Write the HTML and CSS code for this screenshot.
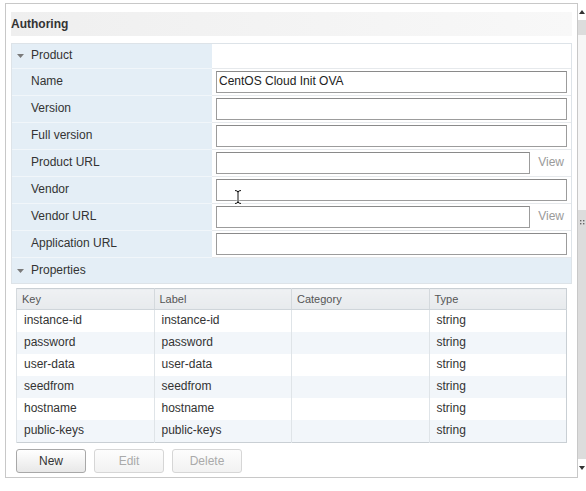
FILE: index.html
```html
<!DOCTYPE html>
<html lang="en">
<head>
    <meta charset="UTF-8">
    <title>Authoring</title>
    <link rel="stylesheet" href="styles.css">
</head>
<body>
    <div class="window">
        <div class="panel">
            <div class="section-title">Authoring</div>

            <div class="props-box">
                <div class="row group">
                    <div class="label"><svg class="caret" width="7" height="4" viewBox="0 0 7 4"><path d="M0 0H7L3.5 4Z" fill="#7a7a7a"/></svg>Product</div>
                    <div class="value"></div>
                </div>
                <div class="row">
                    <div class="label">Name</div>
                    <div class="value"><input type="text" value="CentOS Cloud Init OVA"></div>
                </div>
                <div class="row">
                    <div class="label">Version</div>
                    <div class="value"><input type="text"></div>
                </div>
                <div class="row">
                    <div class="label">Full version</div>
                    <div class="value"><input type="text"></div>
                </div>
                <div class="row">
                    <div class="label">Product URL</div>
                    <div class="value"><input type="text"><span class="view-link">View</span></div>
                </div>
                <div class="row">
                    <div class="label">Vendor</div>
                    <div class="value vendor-cell">
                        <input type="text">
                        <svg class="ibeam" width="8" height="16" viewBox="0 0 8 16">
                            <path d="M1 1.5Q4 1.5 4 3.5Q4 1.5 7 1.5M4 3.5V12.5M1 14.5Q4 14.5 4 12.5Q4 14.5 7 14.5" fill="none" stroke="#fff" stroke-width="2.4"/>
                            <path d="M1 1.5Q4 1.5 4 3.5Q4 1.5 7 1.5M4 3.5V12.5M1 14.5Q4 14.5 4 12.5Q4 14.5 7 14.5" fill="none" stroke="#111" stroke-width="1"/>
                        </svg>
                    </div>
                </div>
                <div class="row">
                    <div class="label">Vendor URL</div>
                    <div class="value"><input type="text"><span class="view-link">View</span></div>
                </div>
                <div class="row">
                    <div class="label">Application URL</div>
                    <div class="value"><input type="text"></div>
                </div>
                <div class="row group full">
                    <div class="label"><svg class="caret" width="7" height="4" viewBox="0 0 7 4"><path d="M0 0H7L3.5 4Z" fill="#7a7a7a"/></svg>Properties</div>
                </div>
            </div>

            <div class="properties">
                <table class="grid">
                    <thead>
                        <tr>
                            <th>Key</th>
                            <th>Label</th>
                            <th>Category</th>
                            <th>Type</th>
                        </tr>
                    </thead>
                    <tbody>
                        <tr><td>instance-id</td><td>instance-id</td><td></td><td>string</td></tr>
                        <tr><td>password</td><td>password</td><td></td><td>string</td></tr>
                        <tr><td>user-data</td><td>user-data</td><td></td><td>string</td></tr>
                        <tr><td>seedfrom</td><td>seedfrom</td><td></td><td>string</td></tr>
                        <tr><td>hostname</td><td>hostname</td><td></td><td>string</td></tr>
                        <tr><td>public-keys</td><td>public-keys</td><td></td><td>string</td></tr>
                    </tbody>
                </table>
                <div class="buttons">
                    <button class="btn">New</button>
                    <button class="btn" disabled>Edit</button>
                    <button class="btn" disabled>Delete</button>
                </div>
            </div>
        </div>

        <div class="scrollbar">
            <div class="sb-btn"><svg width="6" height="4" viewBox="0 0 6 4"><path d="M0 4H6L3 0Z" fill="#333"/></svg></div>
            <div class="sb-track">
                <div class="sb-thumb"></div>
                <div class="sb-grip">
                    <svg width="5" height="5" viewBox="0 0 5 5"><rect x="0" y="0" width="1.4" height="1.4" fill="#666"/><rect x="3" y="0" width="1.4" height="1.4" fill="#666"/><rect x="0" y="3" width="1.4" height="1.4" fill="#666"/><rect x="3" y="3" width="1.4" height="1.4" fill="#666"/></svg>
                </div>
            </div>
            <div class="sb-btn"><svg width="6" height="4" viewBox="0 0 6 4"><path d="M0 0H6L3 4Z" fill="#333"/></svg></div>
        </div>
    </div>
</body>
</html>
```

FILE: styles.css
```css
body {
    margin: 0;
    background-color: #ffffff;
    font-family: "Liberation Sans", Arial, sans-serif;
    font-size: 12px;
    color: #333333;
}

.window {
    display: flex;
    align-items: flex-start;
    padding: 3px 0 0 5px;
}

.panel {
    box-sizing: border-box;
    width: 573px;
    height: 475px;
    border: 1px solid #c8c8c8;
    padding: 8px 5px 0 5px;
}

.section-title {
    height: 24px;
    line-height: 24px;
    font-weight: bold;
    background: linear-gradient(to right, #efefef, #f8f8f8);
    margin-bottom: 7px;
}

.props-box {
    border: 1px solid #dde3e8;
}

.row {
    display: grid;
    grid-template-columns: 200px 1fr;
    height: 27px;
}

.row.group {
    height: 25px;
}

.row.full {
    grid-template-columns: 1fr;
}

.label {
    box-sizing: border-box;
    background-color: #e4eef6;
    border-bottom: 1px solid #f1f6fa;
    padding: 0 0 2px 19px;
    display: flex;
    align-items: center;
}

.group .label {
    padding-left: 5px;
}

.row.full .label {
    border-bottom: none;
}

.caret {
    margin: 2px 7px 0 0;
}

.value {
    box-sizing: border-box;
    border-bottom: 1px solid #e6e9ec;
    padding: 0 4px;
    display: flex;
    align-items: center;
}

.value input {
    flex: 1;
    min-width: 0;
    box-sizing: border-box;
    height: 22px;
    margin: 0;
    padding: 0 2px 2px 2px;
    border: 1px solid #9c9c9c;
    border-top-color: #8a8a8a;
    border-radius: 0;
    font-family: "Liberation Sans", Arial, sans-serif;
    font-size: 12px;
    color: #222222;
    background-color: #ffffff;
}

.view-link {
    margin: 0 3px 2px 8px;
    color: #9a9a9a;
}

.vendor-cell {
    position: relative;
}

.ibeam {
    position: absolute;
    left: 22px;
    top: 12px;
}

.properties {
    padding: 4px 5px 0 5px;
}

.grid {
    width: 100%;
    table-layout: fixed;
    border-collapse: collapse;
    border: 1px solid #c9cfd4;
}

.grid th {
    height: 20px;
    padding: 0 0 0 5px;
    text-align: left;
    font-weight: normal;
    font-size: 11px;
    color: #555555;
    background: linear-gradient(#eff1f3, #e7eaed);
    border-bottom: 1px solid #cfd5da;
    border-left: 1px solid #d4d9dd;
}

.grid td {
    height: 20px;
    padding: 0 0 2px 7px;
    border-left: 1px solid #dfe4e8;
}

.grid tbody tr:nth-child(even) td {
    background-color: #f2f6fa;
}

.buttons {
    display: flex;
    gap: 8px;
    margin-top: 6px;
}

.btn {
    width: 70px;
    height: 24px;
    border: 1px solid #a8a8a8;
    border-radius: 3px;
    background: linear-gradient(#ffffff, #e8e8e8);
    font-family: "Liberation Sans", Arial, sans-serif;
    font-size: 12px;
    color: #333333;
    padding: 0;
}

.btn:disabled {
    border-color: #d6d6d6;
    background: linear-gradient(#fdfdfd, #f2f2f2);
    color: #aaaaaa;
}

.scrollbar {
    width: 8px;
    height: 473px;
    display: flex;
    flex-direction: column;
}

.sb-btn {
    height: 17px;
    display: flex;
    align-items: center;
    justify-content: center;
    background-color: #ffffff;
}

.sb-track {
    flex: 1;
    background-color: #dcdcdc;
    padding-top: 15px;
}

.sb-thumb {
    height: 175px;
    background-color: #f6f6f6;
}

.sb-grip {
    display: flex;
    justify-content: center;
    margin-top: 10px;
}
```
